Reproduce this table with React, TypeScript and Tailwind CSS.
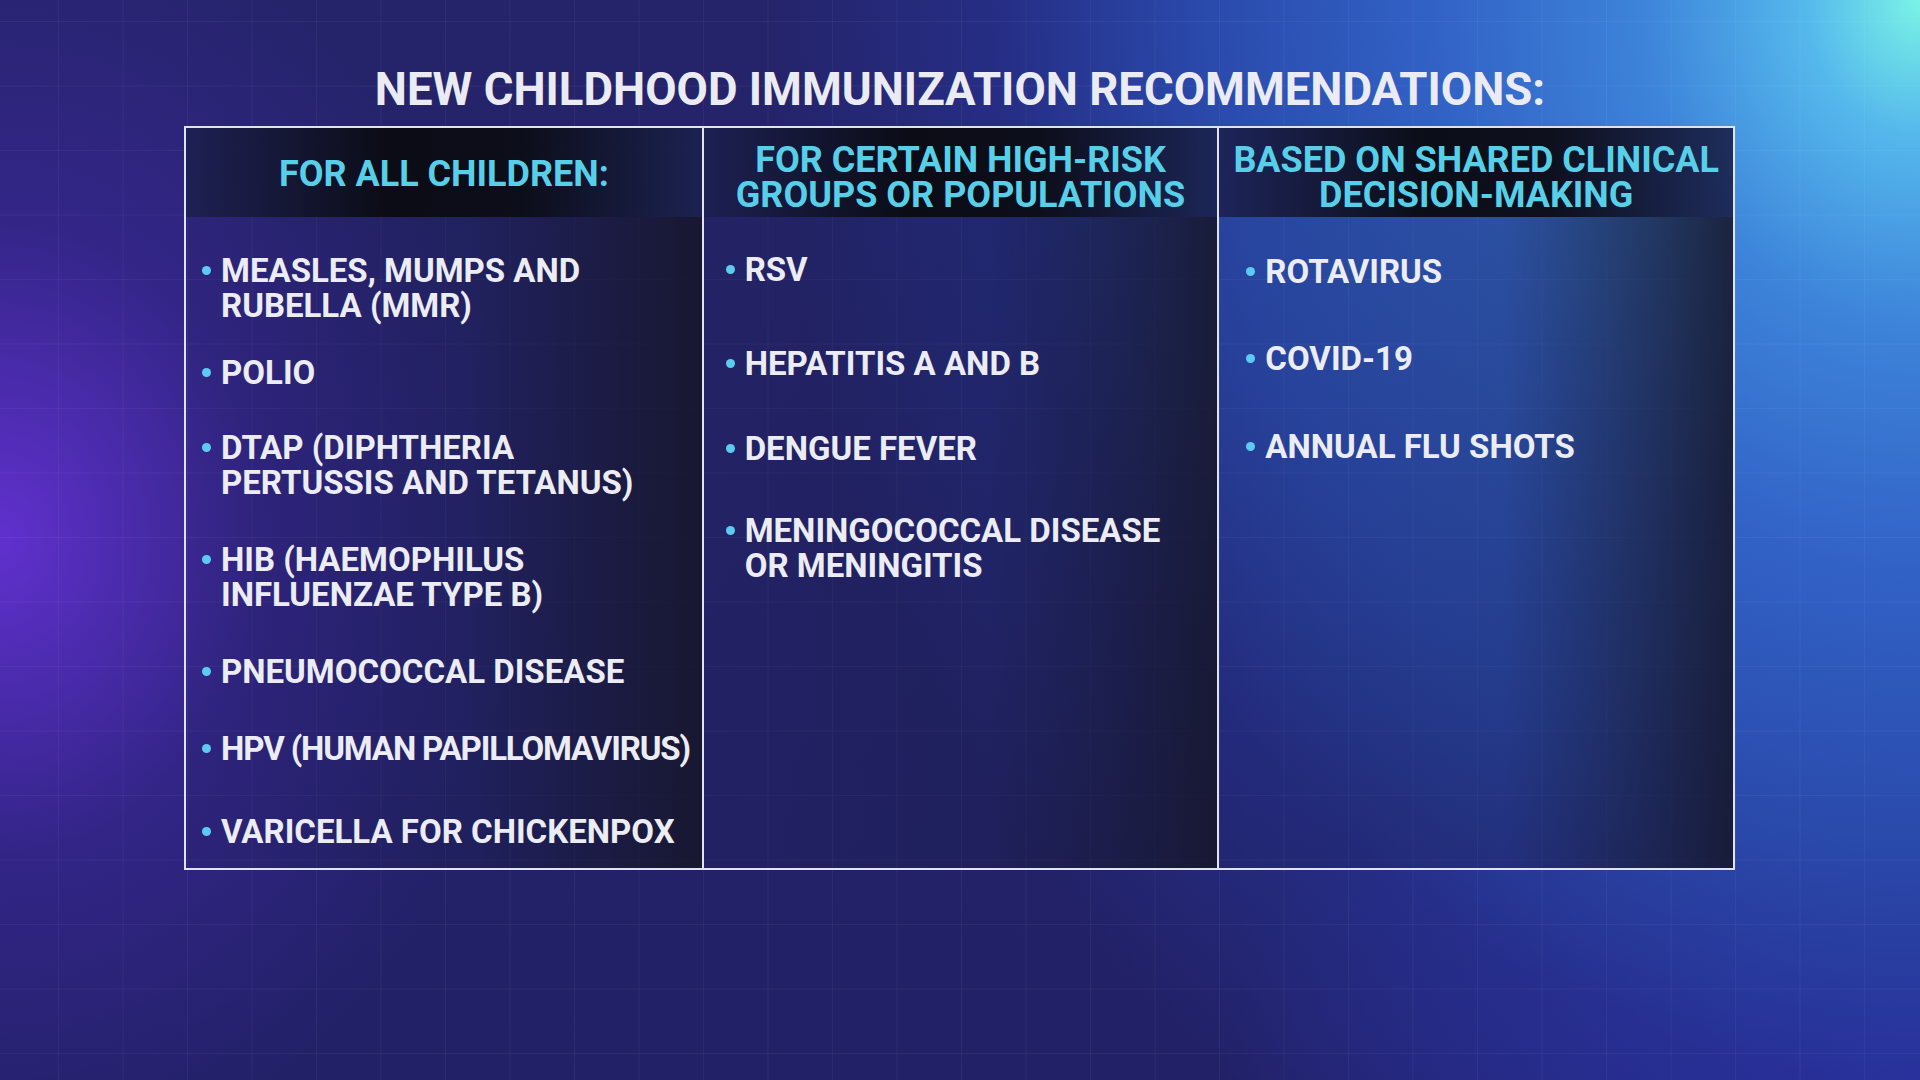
import { Fragment } from "react";

type Item = {
  lines: string[];
  gap: string;
  track?: string;
};

type Column = {
  title: string[];
  head: string;
  pad: string;
  items: Item[];
};

const columns: Column[] = [
  {
    title: ["FOR ALL CHILDREN:"],
    head: "pt-[4px]",
    pad: "pl-[16px]",
    items: [
      { lines: ["MEASLES, MUMPS AND", "RUBELLA (MMR)"], gap: "mt-[36px]" },
      { lines: ["POLIO"], gap: "mt-[32px]" },
      { lines: ["DTAP (DIPHTHERIA", "PERTUSSIS AND TETANUS)"], gap: "mt-[40px]" },
      { lines: ["HIB (HAEMOPHILUS", "INFLUENZAE TYPE B)"], gap: "mt-[42px]" },
      { lines: ["PNEUMOCOCCAL DISEASE"], gap: "mt-[42px]" },
      { lines: ["HPV (HUMAN PAPILLOMAVIRUS)"], gap: "mt-[42px]", track: "tracking-[-0.035em]" },
      { lines: ["VARICELLA FOR CHICKENPOX"], gap: "mt-[48px]" },
    ],
  },
  {
    title: ["FOR CERTAIN HIGH-RISK", "GROUPS OR POPULATIONS"],
    head: "pt-[11px]",
    pad: "pl-[22px]",
    items: [
      { lines: ["RSV"], gap: "mt-[35px]" },
      { lines: ["HEPATITIS A AND B"], gap: "mt-[59px]" },
      { lines: ["DENGUE FEVER"], gap: "mt-[50px]" },
      { lines: ["MENINGOCOCCAL DISEASE", "OR MENINGITIS"], gap: "mt-[47px]" },
    ],
  },
  {
    title: ["BASED ON SHARED CLINICAL", "DECISION-MAKING"],
    head: "pt-[11px]",
    pad: "pl-[27px]",
    items: [
      { lines: ["ROTAVIRUS"], gap: "mt-[37px]" },
      { lines: ["COVID-19"], gap: "mt-[52px]" },
      { lines: ["ANNUAL FLU SHOTS"], gap: "mt-[53px]" },
    ],
  },
];

// lines joined with <br /> so each entry stays one text block
const Lines = ({ lines }: { lines: string[] }) => (
  <>
    {lines.map((line, i) => (
      <Fragment key={i}>
        {i > 0 && <br />}
        {line}
      </Fragment>
    ))}
  </>
);

const Bullet = ({ item }: { item: Item }) => (
  <li className={`flex gap-[10px] ${item.gap}`}>
    <span className="mt-[13px] h-[9px] w-[9px] shrink-0 rounded-full bg-[#5ccbef]" />
    <p className={`whitespace-nowrap text-[33px] leading-[35px] text-[#ececf5] ${item.track ?? ""}`}>
      <Lines lines={item.lines} />
    </p>
  </li>
);

export default function App() {
  return (
    <div className="h-[1080px] w-[1920px] overflow-hidden bg-[radial-gradient(ellipse_1150px_1350px_at_100%_0%,#7af3e6_0%,#55b8ec_10%,#3d84da_24%,#3262c6_42%,#2a4aac_62%,rgba(38,52,150,0.6)_80%,transparent_100%),radial-gradient(ellipse_520px_640px_at_0%_50%,rgba(112,52,232,0.8)_0%,rgba(78,42,190,0.35)_50%,transparent_100%),radial-gradient(ellipse_700px_420px_at_100%_100%,rgba(48,48,190,0.7),transparent),linear-gradient(#25246b,#222167)] font-['Roboto',sans-serif] font-bold">
      <div className="h-full w-full bg-[linear-gradient(rgba(255,255,255,0.045)_1px,transparent_1px),linear-gradient(90deg,rgba(255,255,255,0.045)_1px,transparent_1px)] bg-[size:64.5px_64.5px] bg-[position:58px_21px] pt-[63px]">
        <h1 className="text-center text-[45.5px] leading-[54px] text-[#ebebf3]">
          NEW CHILDHOOD IMMUNIZATION RECOMMENDATIONS:
        </h1>

        <div className="mt-[9px] ml-[184px] grid h-[744px] w-[1551px] grid-cols-3 border-2 border-[#dfe3f0]">
          {columns.map((col, ci) => (
            <div
              key={ci}
              className={`flex flex-col ${ci > 0 ? "border-l-2 border-[#dfe3f0]" : ""}`}
            >
              <div
                className={`flex h-[89px] shrink-0 items-center justify-center bg-[linear-gradient(90deg,rgba(28,32,80,0.9)_0%,rgba(10,11,18,0.97)_40%,rgba(12,13,24,0.97)_65%,rgba(26,34,78,0.9)_100%)] text-center ${col.head}`}
              >
                <h2 className="whitespace-nowrap text-[36px] leading-[35px] text-[#58cfe8]">
                  <Lines lines={col.title} />
                </h2>
              </div>
              <ul
                className={`flex-1 bg-[linear-gradient(90deg,rgba(24,28,72,0.12)_0%,rgba(24,28,70,0.3)_55%,rgba(22,22,42,0.88)_100%)] ${col.pad}`}
              >
                {col.items.map((item, ii) => (
                  <Bullet key={ii} item={item} />
                ))}
              </ul>
            </div>
          ))}
        </div>
      </div>
    </div>
  );
}
